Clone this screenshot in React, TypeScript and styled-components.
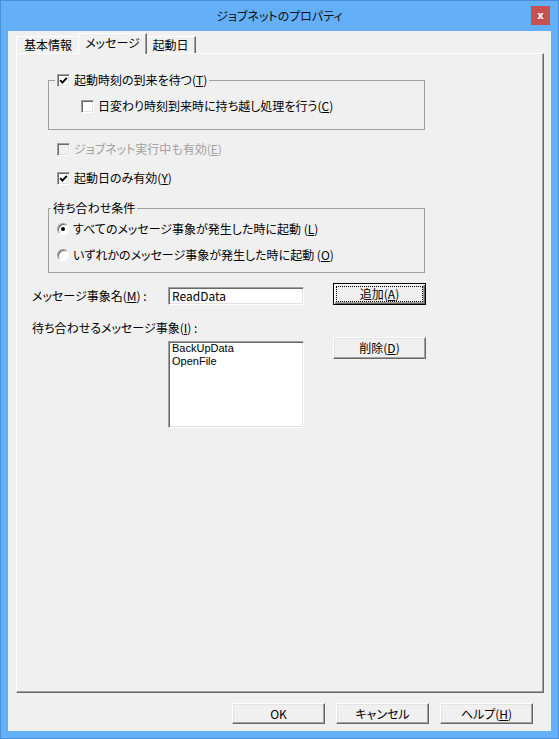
import React from 'react';
import styled, { createGlobalStyle } from 'styled-components';

const GlobalStyle = createGlobalStyle`
  html, body {
    margin: 0;
    padding: 0;
    background: #ffffff;
  }
  body {
    font-family: 'Noto Sans CJK JP', 'Liberation Sans', sans-serif;
    font-size: 12px;
    color: #000;
    font-feature-settings: 'palt';
  }
  * {
    box-sizing: border-box;
  }
`;

const Window = styled.div`
  width: 559px;
  height: 739px;
  background: #63aff8;
  border: 1px solid #4a8fd6;
  display: flex;
  flex-direction: column;
`;

const TitleBar = styled.div`
  height: 30px;
  display: grid;
  grid-template-columns: 1fr auto 1fr;
  align-items: start;
`;

const Title = styled.div`
  grid-column: 2;
  margin-top: 8px;
  font-size: 12px;
  line-height: 14px;
  color: #111;
`;

const CloseButton = styled.div`
  grid-column: 3;
  justify-self: end;
  width: 19px;
  height: 19px;
  margin-top: 5px;
  margin-right: 8px;
  background: #c75050;
  color: #fff;
  display: flex;
  align-items: center;
  justify-content: center;
  font: bold 10px 'DejaVu Sans', sans-serif;
`;

const Client = styled.div`
  flex: 1;
  margin: 0 7px 7px;
  background: #f0f0f0;
  padding: 2px 7px 7px 8px;
  display: flex;
  flex-direction: column;
`;

const TabStrip = styled.div`
  height: 20px;
  display: flex;
  align-items: flex-end;
  position: relative;
  z-index: 1;
`;

const Tab = styled.div<{ $active?: boolean; $width: number }>`
  width: ${(p) => p.$width}px;
  height: ${(p) => (p.$active ? 21 : 17)}px;
  margin: 0 ${(p) => (p.$active ? -2 : 0)}px ${(p) => (p.$active ? -1 : 0)}px;
  padding-top: ${(p) => (p.$active ? 2 : 1)}px;
  position: relative;
  z-index: ${(p) => (p.$active ? 2 : 1)};
  background: #f0f0f0;
  border-top: 1px solid #fff;
  border-left: 1px solid #fff;
  border-right: 1px solid #696969;
  box-shadow: inset -1px 0 #a0a0a0;
  text-align: center;
  line-height: 14px;
  white-space: nowrap;
`;

const Panel = styled.div`
  flex: 1;
  border-top: 1px solid #fff;
  border-left: 1px solid #fff;
  border-right: 1px solid #696969;
  border-bottom: 1px solid #696969;
  box-shadow: inset -1px -1px #a0a0a0;
  padding: 19px 0 0 15px;
  display: flex;
  flex-direction: column;
  align-items: flex-start;
`;

const Group = styled.fieldset<{ $top: number }>`
  margin: ${(p) => p.$top}px 0 0 16px;
  width: 377px;
  min-inline-size: 0;
  padding: 0;
  border: 1px solid #a0a0a0;
`;

const Legend = styled.legend<{ $inset: number }>`
  margin-left: ${(p) => p.$inset}px;
  padding: 0 2px;
  height: 14px;
  line-height: 14px;
  display: flex;
  align-items: center;
  gap: 4px;
  white-space: nowrap;
`;

const GroupBody = styled.div<{ $pad: string; $gap: number }>`
  padding: ${(p) => p.$pad};
  display: flex;
  flex-direction: column;
  gap: ${(p) => p.$gap}px;
`;

const Row = styled.div<{ $top?: number; $left?: number; $disabled?: boolean }>`
  margin: ${(p) => p.$top ?? 0}px 0 0 ${(p) => p.$left ?? 0}px;
  height: 14px;
  line-height: 14px;
  display: flex;
  align-items: center;
  gap: 4px;
  white-space: nowrap;
  color: ${(p) => (p.$disabled ? '#a0a0a0' : '#000')};
`;

const Box = styled.span<{ $disabled?: boolean }>`
  width: 13px;
  height: 13px;
  flex: none;
  border: 1px solid;
  border-color: #a0a0a0 #fff #fff #a0a0a0;
  box-shadow: inset 1px 1px #696969, inset -1px -1px #e3e3e3;
  background: ${(p) => (p.$disabled ? '#f0f0f0' : '#fff')};
  display: flex;
  align-items: center;
  justify-content: center;
`;

const RadioCircle = styled.span`
  width: 12px;
  height: 12px;
  flex: none;
  border-radius: 50%;
  border: 1px solid;
  border-color: #a0a0a0 #fff #fff #a0a0a0;
  box-shadow: inset 1px 1px #696969;
  background: #fff;
  display: flex;
  align-items: center;
  justify-content: center;
`;

const RadioDot = styled.span`
  width: 4px;
  height: 4px;
  border-radius: 50%;
  background: #000;
`;

const Key = styled.span`
  text-decoration: underline;
  text-underline-offset: 1px;
`;

const FormGrid = styled.div`
  margin: 10px 0 0 0;
  display: grid;
  grid-template-columns: 136px 136px 122px;
  grid-template-rows: 22px 30px auto;
`;

const FieldLabel = styled.div<{ $row: number }>`
  grid-column: 1 / span 2;
  grid-row: ${(p) => p.$row};
  align-self: end;
  margin-bottom: ${(p) => (p.$row === 1 ? 2 : 0)}px;
  line-height: 14px;
  white-space: nowrap;
`;

const Sunken = styled.div`
  border: 1px solid;
  border-color: #a0a0a0 #fff #fff #a0a0a0;
  box-shadow: inset 1px 1px #696969, inset -1px -1px #e3e3e3;
  background: #fff;
`;

const TextBox = styled(Sunken)`
  grid-column: 2;
  grid-row: 1;
  align-self: end;
  height: 18px;
  padding: 0 3px;
  line-height: 16px;
`;

const ListBox = styled(Sunken)`
  grid-column: 2;
  grid-row: 3;
  margin-top: 6px;
  height: 87px;
  padding: 0 3px;
`;

const ListItem = styled.div`
  height: 13px;
  line-height: 13px;
  font-family: 'Liberation Sans', Arial, sans-serif;
  font-size: 11px;
`;

const Button = styled.div<{ $focused?: boolean; $h: number }>`
  width: 93px;
  height: ${(p) => p.$h}px;
  padding: 2px;
  display: flex;
  background: #f0f0f0;
  border: 1px solid;
  border-color: ${(p) => (p.$focused ? '#000' : '#fff #696969 #696969 #fff')};
  box-shadow: ${(p) =>
    p.$focused
      ? 'inset 1px 1px #fff, inset -1px -1px #696969, inset -2px -2px #a0a0a0'
      : 'inset -1px -1px #a0a0a0, inset 1px 1px #e3e3e3'};
  white-space: nowrap;
`;

const ButtonFace = styled.span<{ $focused?: boolean }>`
  flex: 1;
  display: flex;
  align-items: center;
  justify-content: center;
  border: 1px dotted ${(p) => (p.$focused ? '#000' : 'transparent')};
  line-height: 14px;
`;

const SideButton = styled.div<{ $row: number; $top: number }>`
  grid-column: 3;
  grid-row: ${(p) => p.$row};
  justify-self: end;
  align-self: start;
  margin-top: ${(p) => p.$top}px;
`;

const Footer = styled.div`
  margin-top: 10px;
  padding-right: 11px;
  display: flex;
  justify-content: flex-end;
  gap: 11px;
`;

const Check = () => (
  <svg width="9" height="9" viewBox="0 0 9 9">
    <path d="M1.2 4.2 L3.4 6.6 L7.8 1.8" fill="none" stroke="#000" strokeWidth="1.9" />
  </svg>
);

const CheckBox = ({ checked, disabled }: { checked?: boolean; disabled?: boolean }) => (
  <Box $disabled={disabled}>{checked && <Check />}</Box>
);

const Radio = ({ checked }: { checked?: boolean }) => (
  <RadioCircle>{checked && <RadioDot />}</RadioCircle>
);

const PushButton = ({
  children,
  focused,
  h = 22,
}: {
  children: React.ReactNode;
  focused?: boolean;
  h?: number;
}) => (
  <Button $focused={focused} $h={h}>
    <ButtonFace $focused={focused}>{children}</ButtonFace>
  </Button>
);

export default function App() {
  return (
    <>
      <GlobalStyle />
      <Window>
        <TitleBar>
          <Title>ジョブネットのプロパティ</Title>
          <CloseButton>x</CloseButton>
        </TitleBar>
        <Client>
          <TabStrip>
            <Tab $width={64}>基本情報</Tab>
            <Tab $width={69} $active>
              メッセージ
            </Tab>
            <Tab $width={51}>起動日</Tab>
          </TabStrip>
          <Panel>
            <Group $top={0}>
              <Legend $inset={6}>
                <CheckBox checked />
                <span>
                  起動時刻の到来を待つ(<Key>T</Key>)
                </span>
              </Legend>
              <GroupBody $pad="12px 0 16px 32px" $gap={0}>
                <Row>
                  <CheckBox />
                  <span>
                    日変わり時刻到来時に持ち越し処理を行う(<Key>C</Key>)
                  </span>
                </Row>
              </GroupBody>
            </Group>

            <Row $top={12} $left={25} $disabled>
              <CheckBox disabled />
              <span>
                ジョブネット実行中も有効(<Key>E</Key>)
              </span>
            </Row>
            <Row $top={15} $left={25}>
              <CheckBox checked />
              <span>
                起動日のみ有効(<Key>Y</Key>)
              </span>
            </Row>

            <Group $top={16}>
              <Legend $inset={2}>待ち合わせ条件</Legend>
              <GroupBody $pad="7px 0 10px 8px" $gap={12}>
                <Row>
                  <Radio checked />
                  <span>
                    すべてのメッセージ事象が発生した時に起動 (<Key>L</Key>)
                  </span>
                </Row>
                <Row>
                  <Radio />
                  <span>
                    いずれかのメッセージ事象が発生した時に起動 (<Key>O</Key>)
                  </span>
                </Row>
              </GroupBody>
            </Group>

            <FormGrid>
              <FieldLabel $row={1}>
                メッセージ事象名(<Key>M</Key>) :
              </FieldLabel>
              <TextBox>ReadData</TextBox>
              <SideButton $row={1} $top={0}>
                <PushButton focused>
                  追加(<Key>A</Key>)
                </PushButton>
              </SideButton>
              <FieldLabel $row={2}>
                待ち合わせるメッセージ事象(<Key>I</Key>) :
              </FieldLabel>
              <ListBox>
                <ListItem>BackUpData</ListItem>
                <ListItem>OpenFile</ListItem>
              </ListBox>
              <SideButton $row={3} $top={2}>
                <PushButton>
                  削除(<Key>D</Key>)
                </PushButton>
              </SideButton>
            </FormGrid>
          </Panel>
          <Footer>
            <PushButton h={21}>OK</PushButton>
            <PushButton h={21}>キャンセル</PushButton>
            <PushButton h={21}>
              ヘルプ(<Key>H</Key>)
            </PushButton>
          </Footer>
        </Client>
      </Window>
    </>
  );
}
